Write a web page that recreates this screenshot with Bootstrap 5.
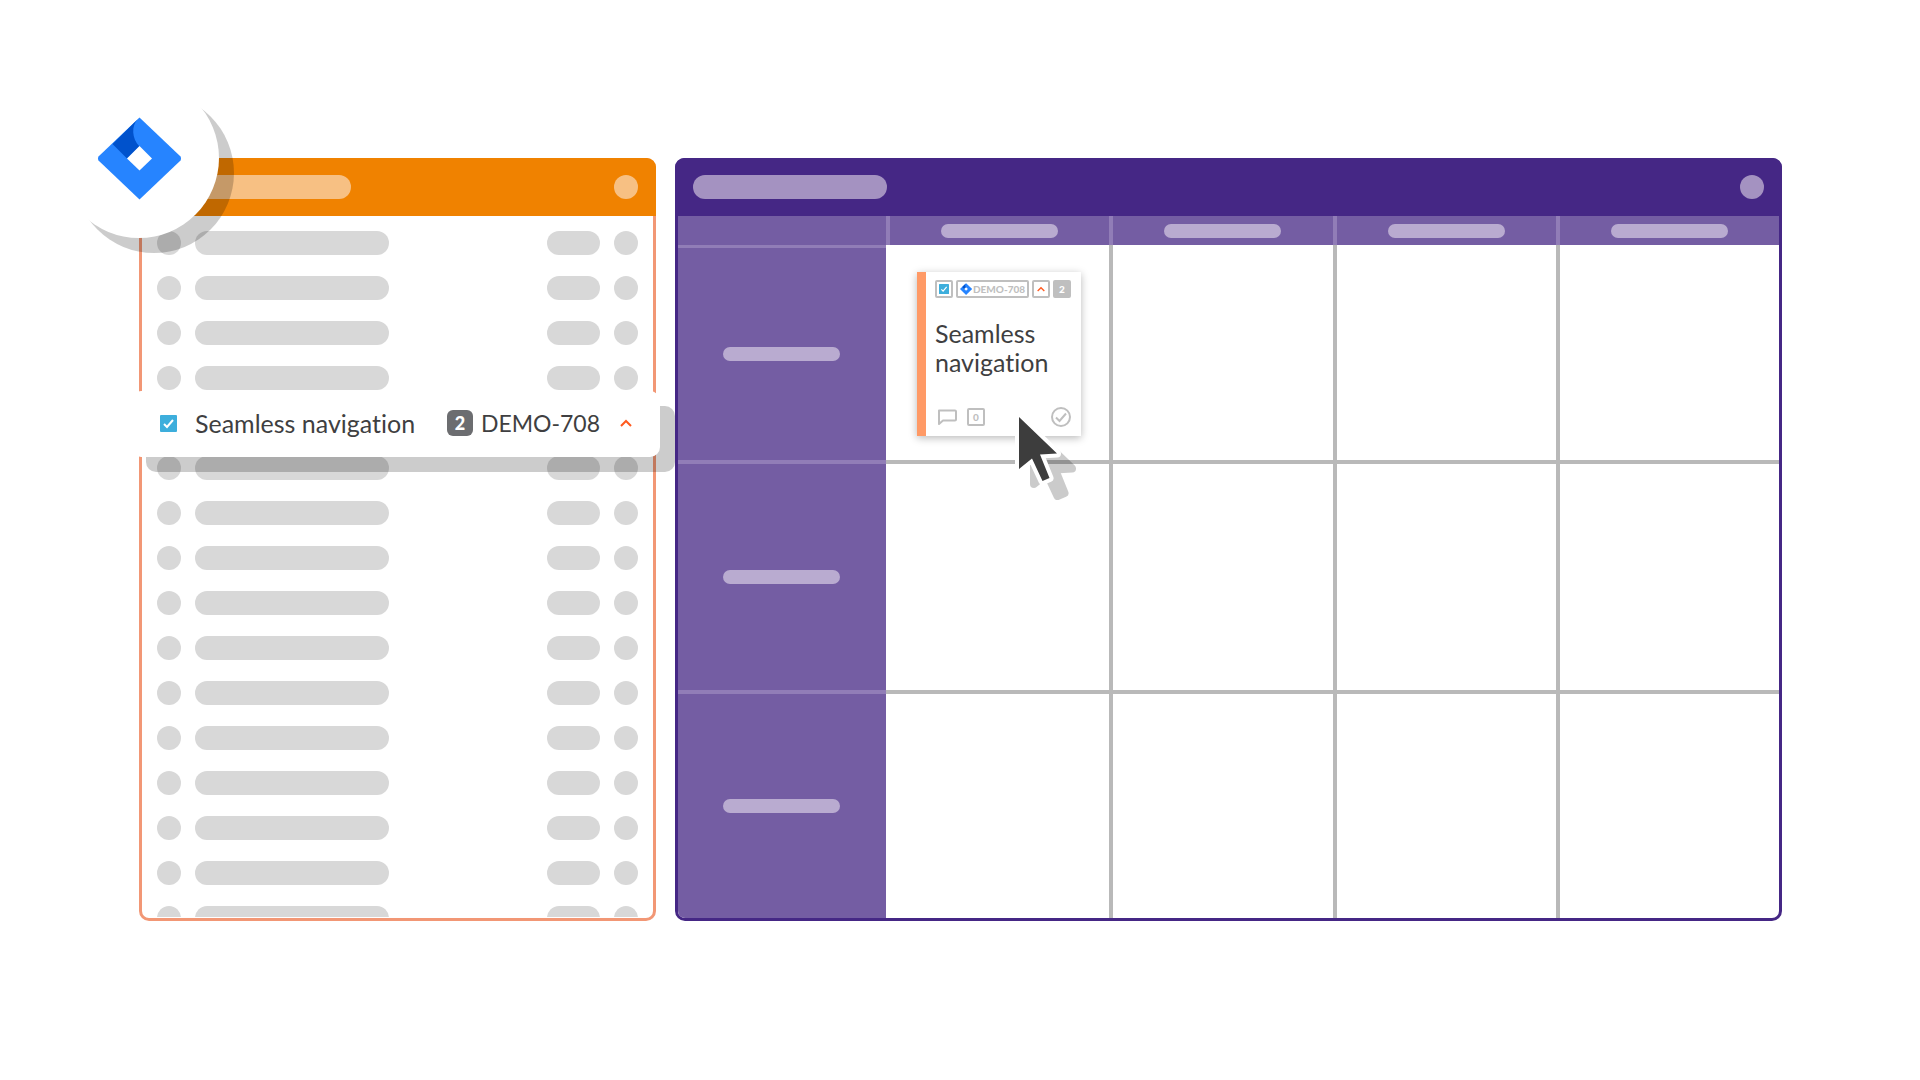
<!DOCTYPE html>
<html lang="en">
<head>
<meta charset="utf-8">
<meta name="viewport" content="width=device-width, initial-scale=1">
<title>Seamless navigation</title>
<link href="https://cdn.jsdelivr.net/npm/bootstrap@5.3.0/dist/css/bootstrap.min.css" rel="stylesheet">
<style>
  body { font-family: Lato, "Liberation Sans", sans-serif; font-variant-ligatures: none; color: #3f3f41; background: #fff; }
  .stage { padding: 158px 138px 0 139px; gap: 19px; }
  .list-pane { flex: 0 0 517px; border: 3px solid #f29775; border-radius: 10px; }
  .board-pane { border: 3px solid #452785; border-radius: 10px; min-width: 0; }
  .pane-head { height: 58px; margin: -3px -3px 0; padding: 0 18px; border-radius: 9px 9px 0 0; }
  .head-orange { background: #f08200; }
  .head-purple { background: #452785; }
  .bar { display: block; height: 24px; border-radius: 12px; background: #d8d8d8; flex: none; }
  .bar-dot { width: 24px; }
  .bar-long { width: 194px; }
  .bar-short { width: 53px; }
  .on-orange .bar { background: #f7c083; }
  .on-purple .bar { background: #a492c1; }
  .rows { padding: 15px 15px 0; gap: 21px; }
  .list-line { height: 24px; }
  .list-line:last-child { height: 11px; margin-bottom: 1px; overflow: hidden; }
  .after-dot { margin-left: 14px; }
  .picked { position: absolute; z-index: 2; top: -20px; left: -26px; right: -22px; height: 66px; padding: 0 28px 2px 29px; background: #fff; border-radius: 10px; box-shadow: 15px 15px 0 rgba(0,0,0,.2); font-size: 25px; line-height: 30px; }
  .picked .tick { margin-right: 18px; }
  .count { width: 26px; height: 26px; border-radius: 6px; background: #6c6d70; color: #fff; font-size: 18px; line-height: 26px; font-weight: 900; text-align: center; margin-right: 8px; }
  .issue-key { font-size: 23px; }
  .picked .caret { margin-left: 20px; }
  .logo-disc { position: absolute; left: 59px; top: 78px; width: 160px; height: 160px; border-radius: 50%; background: #fff; box-shadow: 15px 15px 0 rgba(0,0,0,.2); }
  .grid-board { display: grid; grid-template-columns: 208px repeat(4, 1fr); grid-template-rows: 29px 219px 230px 224px; }
  .cell { border-left: 4px solid #b9b9b9; border-bottom: 4px solid #b9b9b9; min-width: 0; }
  .first-col { border-left: 0; }
  .last-row { border-bottom: 0; }
  .cell-head, .side { background: #745da3; display: flex; align-items: center; justify-content: center; min-width: 0; }
  .cell-head { border-left: 4px solid #917db7; }
  .side { border-bottom: 4px solid #917db7; padding-right: 2px; }
  .side-first { border-bottom: 0; }
  .side-first + .cell-head ~ .side-top { border-top: 3px solid #917db7; }
  .side-last { border-bottom: 0; border-radius: 0 0 0 7px; }
  .chip { display: block; width: 117px; height: 14px; border-radius: 7px; background: #b9abd0; }
  .note { position: relative; width: 164px; height: 164px; margin: 27px 0 0 31px; padding: 8px 10px 9px 9px; border-left: 9px solid #ff9a66; background: #fff; box-shadow: 0 2px 8px rgba(0,0,0,.28); }
  .tag { height: 18px; min-width: 18px; border: 2px solid #bfbfbf; border-radius: 2px; color: #bfbfbf; font-size: 10px; line-height: 14px; font-weight: 900; }
  .tag-key { padding: 0 2px; gap: 1px; }
  .tag-full { background: #bfbfbf; color: #fff; }
  .note-title { font-size: 25px; line-height: 29px; margin: 0 0 9px; font-weight: 400; }
  .note-foot { gap: 10px; }
  .pointer { position: absolute; z-index: 2; left: 74px; top: 128px; }
  svg { display: block; flex: none; }
</style>
</head>
<body>
<svg width="0" height="0" class="position-absolute" aria-hidden="true">
  <symbol id="tick" viewBox="0 0 17 17"><rect width="17" height="17" rx="1" fill="#3daedc"/><path d="M4 9l3 3 6-7" fill="none" stroke="#fff" stroke-width="2"/></symbol>
  <symbol id="caret" viewBox="0 0 12 8"><path d="M1 7l5-5 5 5" fill="none" stroke="#ff5a1f" stroke-width="2"/></symbol>
  <symbol id="jira" viewBox="-0.5 -0.5 84 84"><path d="M42 1L83 40q1 2 0 4L42 83 1 44q-1-2 0-4z" fill="#2684ff"/><path d="M42 1L15 27.500l14.500 14.500L42 30C34 22 34 9 40 3z" fill="#0052cc"/><path d="M42 29.500L54.500 42 42 54 29.500 42z" fill="#fff"/></symbol>
</svg>
<main class="stage d-flex position-relative">
  <section class="list-pane" aria-label="Issue list">
    <header class="pane-head head-orange on-orange d-flex align-items-center justify-content-between"><span class="bar bar-long"></span><span class="bar bar-dot"></span></header>
    <div class="rows d-flex flex-column" id="rows"></div>
  </section>
  <section class="board-pane flex-grow-1" aria-label="Board">
    <header class="pane-head head-purple on-purple d-flex align-items-center justify-content-between"><span class="bar bar-long"></span><span class="bar bar-dot"></span></header>
    <div class="grid-board">
      <div class="side side-first"></div><div class="cell-head"><span class="chip"></span></div><div class="cell-head"><span class="chip"></span></div><div class="cell-head"><span class="chip"></span></div><div class="cell-head"><span class="chip"></span></div>
      <div class="side side-top"><span class="chip"></span></div>
      <div class="cell first-col">
        <article class="note d-flex flex-column justify-content-between">
          <div class="d-flex justify-content-between">
            <span class="tag d-flex align-items-center justify-content-center"><svg width="10" height="10"><use href="#tick"/></svg></span>
            <span class="tag tag-key d-flex align-items-center"><svg width="12" height="12"><use href="#jira"/></svg><span>DEMO-708</span></span>
            <span class="tag d-flex align-items-center justify-content-center"><svg width="8" height="6"><use href="#caret"/></svg></span>
            <span class="tag tag-full text-center">2</span>
          </div>
          <h2 class="note-title">Seamless navigation</h2>
          <div class="note-foot d-flex align-items-center">
            <svg width="22" height="20" viewBox="0 0 22 20" fill="none" stroke="#bfbfbf" stroke-width="2"><path d="M4 3.500h16q1 0 1 1v8q0 1-1 1H8l-4 3.500z" stroke-linejoin="round"/></svg>
            <span class="tag text-center">0</span>
            <svg class="ms-auto" width="20" height="20" viewBox="0 0 20 20" fill="none" stroke="#bfbfbf" stroke-width="2"><circle cx="10" cy="10" r="9"/><path d="M5 10.500l3.500 3.500L15 6.500"/></svg>
          </div>
          <svg class="pointer" width="90" height="110" viewBox="0 0 90 110" aria-hidden="true">
            <g transform="translate(15 15)" opacity=".2"><path d="M19 17v52l13-10.500L42.500 81l7-3L40 54.500l17-1z" fill="#000" stroke="#000" stroke-width="8" stroke-linejoin="round"/></g>
            <path d="M19 17v52l13-10.500L42.500 81l7-3L40 54.500l17-1z" fill="#fff" stroke="#fff" stroke-width="8" stroke-linejoin="round"/>
            <path d="M19 17v52l13-10.500L42.500 81l7-3L40 54.500l17-1z" fill="#3d3d3d"/>
          </svg>
        </article>
      </div>
      <div class="cell"></div><div class="cell"></div><div class="cell"></div>
      <div class="side"><span class="chip"></span></div><div class="cell first-col"></div><div class="cell"></div><div class="cell"></div><div class="cell"></div>
      <div class="side side-last"><span class="chip"></span></div><div class="cell first-col last-row"></div><div class="cell last-row"></div><div class="cell last-row"></div><div class="cell last-row"></div>
    </div>
  </section>
  <div class="logo-disc d-flex align-items-center justify-content-center"><svg width="84" height="84" role="img" aria-label="Jira"><use href="#jira"/></svg></div>
</main>
<template id="line"><div class="list-line d-flex"><span class="bar bar-dot"></span><span class="bar bar-long after-dot"></span><span class="bar bar-short ms-auto"></span><span class="bar bar-dot after-dot"></span></div></template>
<template id="issue"><div class="list-line position-relative"><div class="picked d-flex align-items-center"><svg class="tick" width="17" height="17"><use href="#tick"/></svg><span>Seamless navigation</span><span class="count ms-auto">2</span><span class="issue-key">DEMO-708</span><svg class="caret" width="12" height="8"><use href="#caret"/></svg></div></div></template>
<script>
  const rows = document.getElementById('rows');
  for (let i = 0; i < 16; i++) rows.append(document.getElementById(i === 4 ? 'issue' : 'line').content.cloneNode(true));
</script>
<script src="https://cdn.jsdelivr.net/npm/bootstrap@5.3.0/dist/js/bootstrap.bundle.min.js"></script>
</body>
</html>
